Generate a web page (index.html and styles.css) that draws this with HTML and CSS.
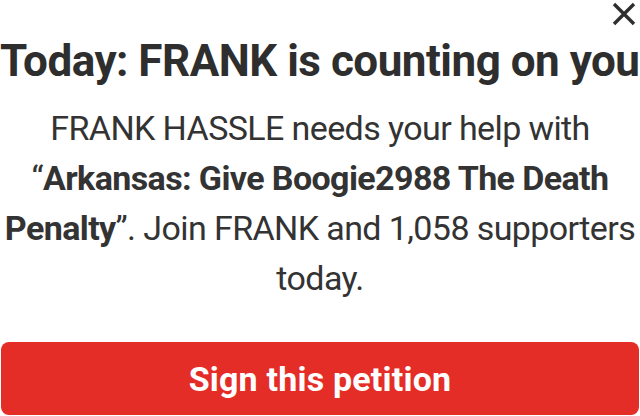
FILE: index.html
```html
<!DOCTYPE html>
<html>
<head>
<meta charset="utf-8">
<link rel="stylesheet" href="styles.css">
</head>
<body>
<div class="modal">
  <div class="top">
    <button class="close" aria-label="Close">
      <svg width="26" height="26" viewBox="0 0 26 26"><path d="M3 3 L23 23 M23 3 L3 23" stroke="#2f2f2f" stroke-width="3.4" stroke-linecap="butt"/></svg>
    </button>
  </div>
  <h1 class="title">Today: FRANK is counting on you</h1>
  <p class="body">FRANK HASSLE needs your help with “<strong>Arkansas: Give Boogie2988 The Death Penalty</strong>”. Join FRANK and 1,058 supporters today.</p>
  <button class="sign">Sign this petition</button>
</div>
</body>
</html>
```
FILE: styles.css
```css
html, body {
  margin: 0;
  padding: 0;
  background: #ffffff;
}
.modal {
  width: 640px;
  height: 416px;
  display: flex;
  flex-direction: column;
  font-family: Roboto, "Liberation Sans", sans-serif;
  color: #333333;
  overflow: hidden;
}
.top {
  display: flex;
  justify-content: flex-end;
  height: 30px;
  padding-right: 3px;
}
.close {
  border: 0;
  background: none;
  padding: 0;
  margin-top: 1px;
  width: 26px;
  height: 26px;
}
.title {
  margin: 6px 0 0 0;
  font-size: 44px;
  font-weight: 700;
  line-height: 50px;
  letter-spacing: -0.5px;
  white-space: nowrap;
  text-align: left;
  color: #2e2e2e;
}
.body {
  margin: 17px 0 0 0;
  font-size: 34px;
  line-height: 50px;
  letter-spacing: -0.6px;
  text-align: center;
  font-weight: 400;
  color: #333333;
}
.body strong {
  font-weight: 700;
}
.sign {
  margin-top: auto;
  margin-left: 1px;
  margin-bottom: 1px;
  width: 638px;
  height: 73px;
  border: 0;
  border-radius: 8px;
  background: #e52d27;
  color: #ffffff;
  font-family: Roboto, "Liberation Sans", sans-serif;
  font-size: 34px;
  font-weight: 700;
  letter-spacing: 0.2px;
  padding: 0;
}
```
